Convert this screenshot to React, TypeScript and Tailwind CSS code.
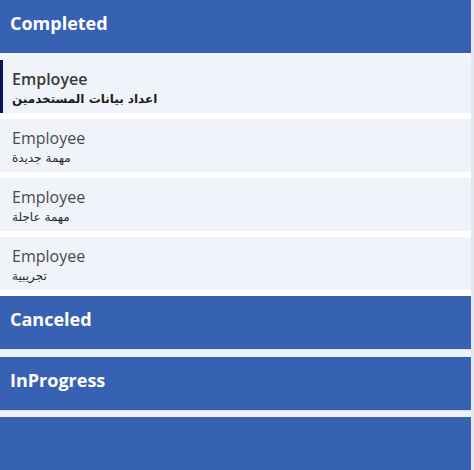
import React from "react";

type Task = { who: string; title: string; active?: boolean };

const completed: Task[] = [
  { who: "Employee", title: "اعداد بيانات المستخدمين", active: true },
  { who: "Employee", title: "مهمة جديدة" },
  { who: "Employee", title: "مهمة عاجلة" },
  { who: "Employee", title: "تجريبية" },
];

function SectionHeader({ label }: { label?: string }) {
  return (
    <div className="h-[53px] shrink-0 bg-[#3761b3] px-[10px] flex items-center">
      <span className="text-white font-bold text-[18px] leading-none -mt-[8px]">{label}</span>
    </div>
  );
}

function TaskItem({ task }: { task: Task }) {
  return (
    <div
      className={
        task.active
          ? "h-[53px] bg-[#f0f3f9] border-l-[3px] border-[#0c1458] pl-[9px] pt-[8px]"
          : "h-[53px] bg-[#f0f3f9] pl-[12px] pt-[8px]"
      }
    >
      <div
        className={
          task.active
            ? "text-[16px] leading-[22px] font-semibold text-[#3a3a3a]"
            : "text-[16px] leading-[22px] text-[#4a4a4a]"
        }
      >
        {task.who}
      </div>
      <div
        dir="rtl"
        className={
          task.active
            ? "w-fit text-[12px] leading-[19px] font-bold text-[#1d1d1d] [font-family:'DejaVu_Sans',sans-serif]"
            : "w-fit text-[12px] leading-[19px] text-[#2a2a2a] [font-family:'DejaVu_Sans',sans-serif]"
        }
      >
        {task.title}
      </div>
    </div>
  );
}

export default function App() {
  return (
    <div className="w-[474px] h-[470px] overflow-hidden bg-white flex [font-family:'Open_Sans',sans-serif]">
      <div className="w-[471px] flex flex-col">
        <SectionHeader label="Completed" />
        <div className="h-[7px] bg-[#f2f5fa]" />
        <div className="flex flex-col gap-[6px] pb-[6px] bg-white">
          {completed.map((t, i) => (
            <TaskItem key={i} task={t} />
          ))}
        </div>
        <SectionHeader label="Canceled" />
        <div className="h-[8px] shrink-0 bg-[#eef3fa] border-t border-[#dbe4f3]" />
        <SectionHeader label="InProgress" />
        <div className="h-[7px] shrink-0 bg-[#eef3fa] border-t border-[#dbe4f3]" />
        <SectionHeader />
      </div>
      <div className="w-[3px] bg-[#e4e7ee]" />
    </div>
  );
}
